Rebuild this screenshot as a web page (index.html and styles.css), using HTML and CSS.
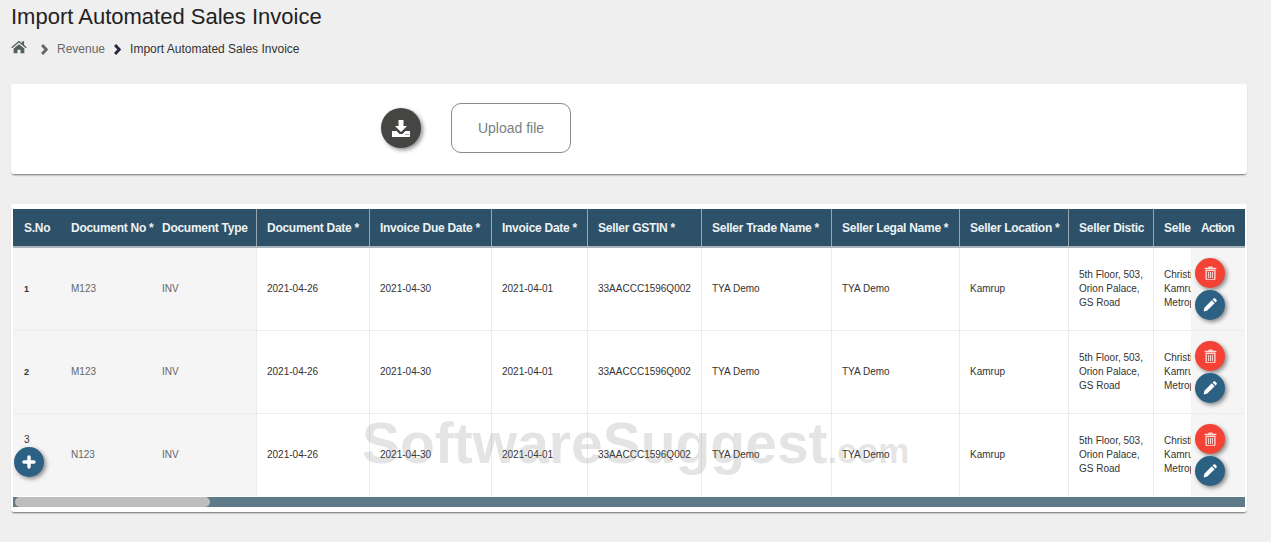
FILE: index.html
```html
<!DOCTYPE html>
<html lang="en">
<head>
<meta charset="utf-8">
<title>Import Automated Sales Invoice</title>
<link rel="stylesheet" href="styles.css">
</head>
<body>
<svg class="defs" aria-hidden="true">
  <symbol id="trash" viewBox="0 0 14 16"><path d="M5 .6h4l.9 1.500H13a.8.8 0 0 1 0 1.700H1a.8.8 0 0 1 0-1.700h3.100z" fill="currentColor"/><path d="M2 5h10v9.300A1.500 1.500 0 0 1 10.500 15.800h-7A1.500 1.500 0 0 1 2 14.300z" fill="none" stroke="currentColor" stroke-width="1.500"/><path d="M4.800 6.800v7M7 6.800v7M9.200 6.800v7" stroke="currentColor" stroke-width="1.100"/></symbol>
  <symbol id="pencil" viewBox="0 0 16 16"><path d="M.7 15.300l.9-4.200L10 2.700l3.300 3.300-8.400 8.400zM11 1.700l1-1a1.400 1.400 0 0 1 2 0l1.300 1.300a1.400 1.400 0 0 1 0 2l-1 1z" fill="currentColor"/></symbol>
</svg>
<main class="page">
  <h1 class="title">Import Automated Sales Invoice</h1>
  <nav class="crumbs">
    <svg class="home" viewBox="0 0 18 15"><path d="M9 0.500L0.300 7.700l1 1.200L9 2.500l7.700 6.400 1-1.200-3-2.500V1h-2.200v2.300zM3 9.300V14.500h4.300v-4h3.400v4H15V9.300L9 4.300z" fill="currentColor"/></svg>
    <svg class="chev" viewBox="0 0 8 10"><path d="M1.800 1l3.800 4-3.800 4" fill="none" stroke="currentColor" stroke-width="2.600"/></svg>
    <span class="crumb-link">Revenue</span>
    <svg class="chev chev-dark" viewBox="0 0 8 10"><path d="M1.800 1l3.800 4-3.800 4" fill="none" stroke="currentColor" stroke-width="2.600"/></svg>
    <span class="crumb-current">Import Automated Sales Invoice</span>
  </nav>

  <section class="card upload-card">
    <button class="round-btn download" type="button" aria-label="Download">
      <svg viewBox="0 0 18 17"><path d="M6.500 0h5v6H15l-6 6-6-6h3.500z" fill="currentColor"/><path d="M0 11h4.500l3 3h3l3-3H18v6H0z" fill="currentColor"/><path d="M13.500 14.500h1M15.500 14.500h1" stroke="#444" stroke-width="1"/></svg>
    </button>
    <button class="upload-btn" type="button">Upload file</button>
  </section>

  <section class="card table-card">
    <div class="table-wrap">
      <table class="grid">
        <colgroup>
          <col class="c1"><col class="c2"><col class="c3"><col class="c4"><col class="c5"><col class="c6"><col class="c7"><col class="c8"><col class="c9"><col class="c10"><col class="c11"><col class="c12"><col class="c13">
        </colgroup>
        <thead>
          <tr>
            <th class="nb">S.No</th><th class="nb">Document No *</th><th class="nb">Document Type</th><th>Document Date *</th><th>Invoice Due Date *</th><th>Invoice Date *</th><th>Seller GSTIN *</th><th>Seller Trade Name *</th><th>Seller Legal Name *</th><th>Seller Location *</th><th>Seller Distic</th><th>Selle</th><th class="nb act">Action</th>
          </tr>
        </thead>
        <tbody>
          <tr>
            <td class="frozen sno"><b>1</b></td><td class="frozen">M123</td><td class="frozen">INV</td><td>2021-04-26</td><td>2021-04-30</td><td>2021-04-01</td><td>33AACCC1596Q002</td><td>TYA Demo</td><td>TYA Demo</td><td>Kamrup</td><td>5th Floor, 503,<br>Orion Palace,<br>GS Road</td><td class="clip">Christian<br>Kamrup<br>Metropolitan</td>
            <td class="frozen actions"><div class="stack"><button class="round-btn danger" type="button" aria-label="Delete"><svg><use href="#trash"/></svg></button><button class="round-btn primary" type="button" aria-label="Edit"><svg><use href="#pencil"/></svg></button></div></td>
          </tr>
          <tr>
            <td class="frozen sno"><b>2</b></td><td class="frozen">M123</td><td class="frozen">INV</td><td>2021-04-26</td><td>2021-04-30</td><td>2021-04-01</td><td>33AACCC1596Q002</td><td>TYA Demo</td><td>TYA Demo</td><td>Kamrup</td><td>5th Floor, 503,<br>Orion Palace,<br>GS Road</td><td class="clip">Christian<br>Kamrup<br>Metropolitan</td>
            <td class="frozen actions"><div class="stack"><button class="round-btn danger" type="button" aria-label="Delete"><svg><use href="#trash"/></svg></button><button class="round-btn primary" type="button" aria-label="Edit"><svg><use href="#pencil"/></svg></button></div></td>
          </tr>
          <tr>
            <td class="frozen sno sno-add"><span>3</span></td><td class="frozen">N123</td><td class="frozen">INV</td><td>2021-04-26</td><td>2021-04-30</td><td>2021-04-01</td><td>33AACCC1596Q002</td><td>TYA Demo</td><td>TYA Demo</td><td>Kamrup</td><td>5th Floor, 503,<br>Orion Palace,<br>GS Road</td><td class="clip">Christian<br>Kamrup<br>Metropolitan</td>
            <td class="frozen actions"><div class="stack"><button class="round-btn danger" type="button" aria-label="Delete"><svg><use href="#trash"/></svg></button><button class="round-btn primary" type="button" aria-label="Edit"><svg><use href="#pencil"/></svg></button></div></td>
          </tr>
        </tbody>
      </table>
      <button class="round-btn primary add" type="button" aria-label="Add row">
        <svg viewBox="0 0 14 14"><path d="M7 2v10M2 7h10" stroke="currentColor" stroke-width="3.400" stroke-linecap="round"/></svg>
      </button>
      <div class="watermark">SoftwareSuggest<small>.com</small></div>
    </div>
    <div class="scrollbar"><div class="thumb"></div></div>
  </section>
</main>
</body>
</html>
```
FILE: styles.css
```css
* { box-sizing: border-box; }
html, body { margin: 0; height: 100%; }
body {
  background: #efefef;
  font-family: "Liberation Sans", Arial, sans-serif;
  color: #333;
  overflow: hidden;
}
.defs { position: absolute; width: 0; height: 0; }
.page { padding: 0 24px 0 11px; }
.title {
  margin: 0;
  padding-top: 4px;
  font-size: 22px;
  line-height: 25px;
  font-weight: 400;
  color: #222;
}
.crumbs {
  display: flex;
  align-items: center;
  height: 20px;
  margin-top: 10px;
  margin-bottom: -1px;
  font-size: 12px;
  color: #666;
}
.home { width: 16px; height: 14px; margin-top: -5px; color: #55605b; }
.chev { width: 9px; height: 11px; margin-left: 13px; color: #666; }
.crumb-link { margin-left: 8px; color: #6a6a6a; }
.chev-dark { margin-left: 8px; color: #2b2340; }
.crumb-current { margin-left: 8px; color: #333; }
.card {
  background: #fff;
  border-radius: 3px;
  box-shadow: 0 2px 2px -1px rgba(0, 0, 0, .55);
}
.upload-card {
  display: flex;
  align-items: center;
  height: 90px;
  margin-top: 26px;
  padding-left: 370px;
  padding-bottom: 2px;
  gap: 30px;
}
.round-btn {
  display: flex;
  align-items: center;
  justify-content: center;
  padding: 0;
  border: 0;
  border-radius: 50%;
  color: #fff;
  box-shadow: 2px 2px 4px rgba(0, 0, 0, .45);
}
.download { width: 40px; height: 40px; background: #454543; }
.download svg { width: 18px; height: 17px; }
.upload-btn {
  width: 120px;
  height: 50px;
  border: 1px solid #8a8a8a;
  border-radius: 10px;
  background: #fff;
  font: 14px "Liberation Sans", Arial, sans-serif;
  color: #7a7f80;
}
.table-card {
  margin-top: 30px;
  height: 308px;
  padding: 5px 2px 5px;
}
.table-wrap { position: relative; overflow: hidden; height: 288px; }
.grid {
  table-layout: fixed;
  width: 1232px;
  border-collapse: collapse;
}
.c1 { width: 48px; } .c2 { width: 91px; } .c3 { width: 104px; } .c4 { width: 113px; }
.c5 { width: 122px; } .c6 { width: 96px; } .c7 { width: 114px; } .c8 { width: 130px; }
.c9 { width: 128px; } .c10 { width: 109px; } .c11 { width: 85px; } .c12 { width: 38px; } .c13 { width: 54px; }
th {
  height: 38px;
  padding: 0 0 0 10.5px;
  background: #2c5168;
  color: #eef2f4;
  font-size: 12px;
  letter-spacing: -.27px;
  font-weight: 700;
  text-align: left;
  white-space: nowrap;
  overflow: hidden;
  border-left: 1px solid #9aa7b0;
  border-bottom: 2px solid #a9b3ba;
}
th.nb { border-left: 0; padding-left: 10px; overflow: visible; }
th:first-child { padding-left: 11px; }
th.act { letter-spacing: -.7px; }
td {
  height: 83px;
  padding: 0 0 0 10.5px;
  font-size: 10px;
  line-height: 14px;
  color: #333;
  background: #fff;
  border-left: 1px solid #ececec;
  border-bottom: 1px solid #ececec;
  white-space: nowrap;
  overflow: hidden;
}
tbody tr:last-child td { border-bottom: 0; }
td.frozen { padding-left: 10px; background: #f5f5f5; border-left: 0; color: #666; }
td.sno { padding-left: 11px; color: #333; }
td.sno b { font-size: 9px; }
.sno-add span { display: block; margin-bottom: 30px; }
td.actions { padding: 0 0 0 4px; }
.stack { display: flex; flex-direction: column; gap: 2px; }
.stack .round-btn { width: 30px; height: 30px; }
.danger { background: #f44336; }
.primary { background: #2c6184; }
.danger svg { width: 13px; height: 14px; color: #fbdcd8; }
.primary svg { width: 14px; height: 14px; }
.add {
  position: absolute;
  left: 1px;
  top: 238px;
  width: 30px;
  height: 30px;
}
.add svg { width: 14px; height: 14px; }
.watermark {
  position: absolute;
  left: 349px;
  top: 204px;
  font-size: 57px;
  line-height: 60px;
  font-weight: 700;
  color: rgba(120, 120, 120, .2);
  white-space: nowrap;
  pointer-events: none;
}
.watermark small { font-size: 35px; }
.scrollbar { height: 10px; background: #5f7b89; }
.thumb { width: 195px; height: 10px; margin-left: 2px; border-radius: 5px; background: #bdbdbd; }
```
